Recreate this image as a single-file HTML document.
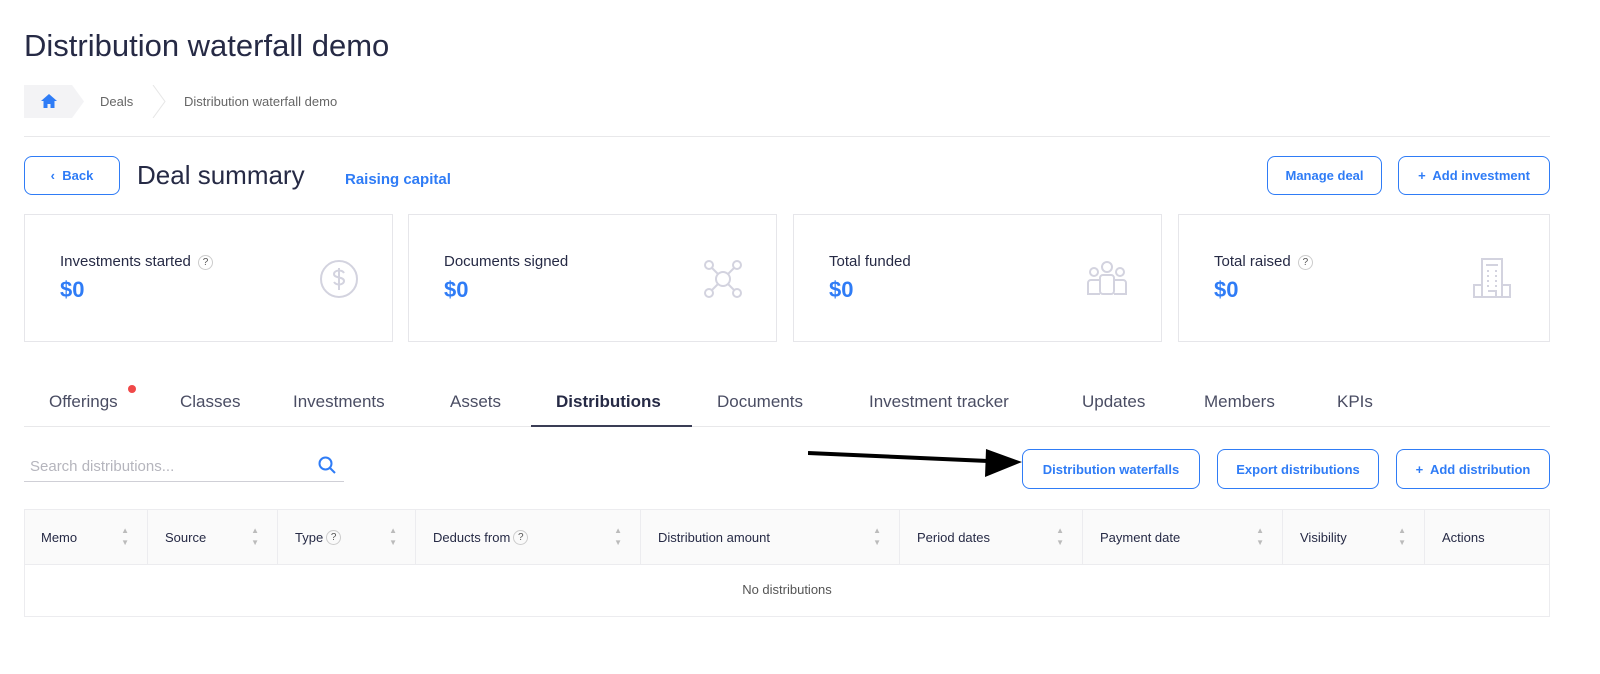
<!DOCTYPE html>
<html><head><meta charset="utf-8"><style>
*{box-sizing:border-box;margin:0;padding:0}
body{width:1600px;height:674px;background:#fff;font-family:"Liberation Sans",sans-serif;color:#262a45;position:relative;overflow:hidden}
.a{position:absolute}
.btn{position:absolute;border:1px solid #2f7cf6;border-radius:8px;color:#2f7cf6;font-weight:bold;font-size:13px;display:flex;align-items:center;justify-content:center;background:#fff}
.card{position:absolute;top:214px;height:128px;border:1px solid #e6e6ea;}
.card .l{position:absolute;left:35px;top:38px;font-size:15px;color:#262a45}
.card .v{position:absolute;left:35px;top:62px;font-size:22px;font-weight:bold;color:#2f7cf6}
.q{display:inline-block;width:15px;height:15px;border:1px solid #ccc;border-radius:50%;font-size:10px;text-align:center;line-height:13px;color:#555;vertical-align:1px;margin-left:3px}
.tab{position:absolute;top:392px;font-size:17px;color:#4a4d63}
th{font-weight:normal}
.col{position:absolute;top:509px;height:56px;border-right:1px solid #ececef;font-size:13px;display:flex;align-items:center;padding-left:17px;color:#262a45}
.s{position:absolute;right:18px;top:16px;font-size:8px;color:#bbb;line-height:12px}
</style></head><body>
<div class="a" style="left:24px;top:28px;font-size:31px;color:#262a45">Distribution waterfall demo</div>
<div class="a" style="left:24px;top:85px;width:48px;height:33px;background:#f3f3f5"></div>
<svg class="a" style="left:72px;top:85px" width="12" height="33"><polygon points="0,0 12,16.5 0,33" fill="#f3f3f5"/></svg>
<svg class="a" style="left:40px;top:93px" width="18" height="16" viewBox="0 0 18 16"><path d="M9 1L1 8h2.5v7h4v-4h3v4h4V8H17z" fill="#2f7cf6"/></svg>
<div class="a" style="left:100px;top:94px;font-size:13px;color:#666">Deals</div>
<svg class="a" style="left:152px;top:85px" width="14" height="33"><polyline points="1,0 13,16.5 1,33" fill="none" stroke="#e6e6e6"/></svg>
<div class="a" style="left:184px;top:94px;font-size:13px;color:#666">Distribution waterfall demo</div>
<div class="a" style="left:24px;top:136px;width:1526px;height:1px;background:#e8e8ea"></div>
<div class="btn" style="left:24px;top:156px;width:96px;height:39px">‹&nbsp; Back</div>
<div class="a" style="left:137px;top:160px;font-size:26px;color:#262a45">Deal summary</div>
<div class="a" style="left:345px;top:171px;font-size:15px;font-weight:bold;color:#2f7cf6">Raising capital</div>
<div class="btn" style="left:1267px;top:156px;width:115px;height:39px">Manage deal</div>
<div class="btn" style="left:1398px;top:156px;width:152px;height:39px">+&nbsp; Add investment</div>

<div class="card" style="left:24px;width:369px"><div class="l">Investments started <span class="q">?</span></div><div class="v">$0</div>
<svg class="a" style="left:294px;top:44px" width="40" height="40" viewBox="0 0 40 40" fill="none" stroke="#d3d3df" stroke-width="2"><circle cx="20" cy="20" r="18"/><path d="M25 14c-1-2-3-2.5-5-2.5s-5 1-5 3.5 3 3 5 3.5 5 1 5 3.5-3 3.5-5 3.5-4-1-5-2.5M20 9v22"/></svg></div>
<div class="card" style="left:408px;width:369px"><div class="l">Documents signed</div><div class="v">$0</div>
<svg class="a" style="left:292px;top:42px" width="44" height="44" viewBox="0 0 44 44" fill="none" stroke="#d3d3df" stroke-width="2"><circle cx="8" cy="8" r="4"/><circle cx="36" cy="8" r="4"/><circle cx="8" cy="36" r="4"/><circle cx="36" cy="36" r="4"/><circle cx="22" cy="22" r="7"/><path d="M11 11l6 6M33 11l-6 6M11 33l6-6M33 33l-6-6"/></svg></div>
<div class="card" style="left:793px;width:369px"><div class="l">Total funded</div><div class="v">$0</div>
<svg class="a" style="left:293px;top:45px" width="40" height="36" viewBox="0 0 40 36" fill="none" stroke="#d3d3df" stroke-width="2"><circle cx="20" cy="7" r="5"/><circle cx="7" cy="12" r="4"/><circle cx="33" cy="12" r="4"/><rect x="13" y="15" width="14" height="19" rx="3"/><path d="M13 20H4a3 3 0 0 0-3 3v11h12M27 20h9a3 3 0 0 1 3 3v11H27"/></svg></div>
<div class="card" style="left:1178px;width:372px"><div class="l">Total raised <span class="q">?</span></div><div class="v">$0</div>
<svg class="a" style="left:293px;top:42px" width="40" height="42" viewBox="0 0 40 42" fill="none" stroke="#d3d3df" stroke-width="2"><rect x="10" y="2" width="20" height="38"/><path d="M2 28h8v12H2zM30 28h8v12h-8zM14 8h12M15 14h2M23 14h2M15 19h2M23 19h2M15 24h2M23 24h2M15 29h2M23 29h2M16 34h8v6"/></svg></div>

<div class="tab" style="left:49px">Offerings</div><div class="a" style="left:128px;top:385px;width:8px;height:8px;border-radius:50%;background:#f04848"></div>
<div class="tab" style="left:180px">Classes</div>
<div class="tab" style="left:293px">Investments</div>
<div class="tab" style="left:450px">Assets</div>
<div class="tab" style="left:556px;font-weight:bold;color:#262a45">Distributions</div>
<div class="tab" style="left:717px">Documents</div>
<div class="tab" style="left:869px">Investment tracker</div>
<div class="tab" style="left:1082px">Updates</div>
<div class="tab" style="left:1204px">Members</div>
<div class="tab" style="left:1337px">KPIs</div>
<div class="a" style="left:24px;top:426px;width:1526px;height:1px;background:#e8e8ea"></div>
<div class="a" style="left:531px;top:425px;width:161px;height:2px;background:#3a3d55"></div>

<div class="a" style="left:30px;top:458px;font-size:15px;color:#b5b5bd">Search distributions...</div>
<svg class="a" style="left:318px;top:456px" width="18" height="18" viewBox="0 0 18 18" fill="none" stroke="#2f7cf6" stroke-width="2"><circle cx="7.5" cy="7.5" r="6"/><path d="M12 12l5 5"/></svg>
<div class="a" style="left:24px;top:481px;width:320px;height:1px;background:#cfcfd6"></div>

<svg class="a" style="left:808px;top:445px" width="215" height="36"><path d="M0 8L180 16" stroke="#000" stroke-width="4"/><polygon points="178,4 214,17 177,32" fill="#000"/></svg>
<div class="btn" style="left:1022px;top:449px;width:178px;height:40px">Distribution waterfalls</div>
<div class="btn" style="left:1217px;top:449px;width:162px;height:40px">Export distributions</div>
<div class="btn" style="left:1396px;top:449px;width:154px;height:40px">+&nbsp; Add distribution</div>

<div class="a" style="left:24px;top:509px;width:1526px;height:108px;border:1px solid #ececef"></div>
<div class="a" style="left:25px;top:510px;width:1524px;height:55px;background:#fafafa;border-bottom:1px solid #ececef"></div>
<div class="col" style="left:24px;width:124px">Memo<div class="s">▲<br>▼</div></div>
<div class="col" style="left:148px;width:130px">Source<div class="s">▲<br>▼</div></div>
<div class="col" style="left:278px;width:138px">Type <span class="q">?</span><div class="s">▲<br>▼</div></div>
<div class="col" style="left:416px;width:225px">Deducts from <span class="q">?</span><div class="s">▲<br>▼</div></div>
<div class="col" style="left:641px;width:259px">Distribution amount<div class="s">▲<br>▼</div></div>
<div class="col" style="left:900px;width:183px">Period dates<div class="s">▲<br>▼</div></div>
<div class="col" style="left:1083px;width:200px">Payment date<div class="s">▲<br>▼</div></div>
<div class="col" style="left:1283px;width:142px">Visibility<div class="s">▲<br>▼</div></div>
<div class="col" style="left:1425px;width:125px;border-right:none">Actions</div>
<div class="a" style="left:24px;top:582px;width:1526px;text-align:center;font-size:13px;color:#555">No distributions</div>
</body></html>
